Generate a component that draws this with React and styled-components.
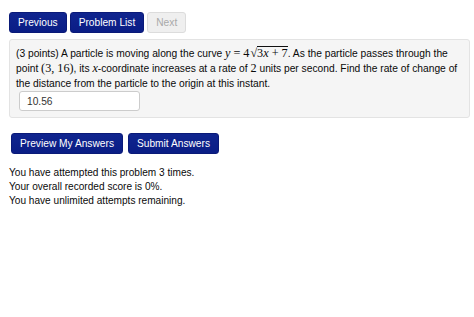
import React from 'react';
import styled, { createGlobalStyle } from 'styled-components';

const GlobalStyle = createGlobalStyle`
  html, body {
    margin: 0;
    padding: 0;
    background: #ffffff;
  }
  body {
    font-family: 'Liberation Sans', Arial, Helvetica, sans-serif;
    font-size: 10.2px;
    color: #0a0a0a;
  }
`;

const Page = styled.div`
  padding: 12px 4px 20px 9px;
`;

const NavBar = styled.div`
  display: flex;
  gap: 3px;
`;

const Button = styled.button`
  height: 21px;
  padding: 0 ${p => p.pad || 8}px;
  font-family: 'Liberation Sans', Arial, sans-serif;
  font-size: 10.2px;
  line-height: 19px;
  border-radius: 3px;
  border: 1px solid ${p => (p.disabled ? '#dcdcdc' : '#0a1a78')};
  background: ${p => (p.disabled ? '#efefef' : 'linear-gradient(180deg, #10258f 0%, #0a1d85 100%)')};
  color: ${p => (p.disabled ? '#a9a9a9' : '#ffffff')};
  cursor: ${p => (p.disabled ? 'default' : 'pointer')};
`;

const ProblemBox = styled.div`
  margin-top: 6px;
  padding: 6px 7px 6px 6px;
  background: #f5f5f5;
  border: 1px solid #e3e3e3;
  border-radius: 3px;
`;

const ProblemText = styled.p`
  margin: 0;
  line-height: 15px;
  font-size: 10.25px;
`;

const Math = styled.span`
  font-family: 'Liberation Serif', 'Times New Roman', serif;
  font-size: 12.2px;
  font-style: ${p => (p.italic ? 'italic' : 'normal')};
`;

const Radical = styled.span`
  font-family: 'Liberation Serif', serif;
  font-size: 12.2px;
  margin-left: 1px;
`;

const Radicand = styled.span`
  border-top: 1px solid #111;
  display: inline-block;
  line-height: 12px;
`;

const AnswerInput = styled.input`
  display: block;
  margin: 0 0 0 3px;
  width: 121px;
  height: 20px;
  box-sizing: border-box;
  padding: 0 7px;
  font-family: 'Liberation Sans', Arial, sans-serif;
  font-size: 10.2px;
  color: #333;
  border: 1px solid #cccccc;
  border-radius: 3px;
  background: #ffffff;
`;

const Actions = styled.div`
  display: flex;
  gap: 5px;
  margin: 15px 0 0 2px;
`;

const Status = styled.div`
  margin-top: 12px;
  line-height: 14px;
  font-size: 10.1px;
`;

export default function App() {
  return (
    <>
      <GlobalStyle />
      <Page>
        <NavBar>
          <Button>Previous</Button>
          <Button>Problem List</Button>
          <Button disabled>Next</Button>
        </NavBar>

        <ProblemBox>
          <ProblemText>
            (3 points) A particle is moving along the curve{' '}
            <Math italic>y</Math> <Math>= 4</Math>
            <Radical>√</Radical>
            <Radicand>
              <Math>3</Math>
              <Math italic>x</Math>
              <Math> + 7</Math>
            </Radicand>
            . As the particle passes through the point <Math>(3, 16)</Math>, its{' '}
            <Math italic>x</Math>-coordinate increases at a rate of <Math>2</Math> units per
            second. Find the rate of change of the distance from the particle to the origin at
            this instant.
          </ProblemText>
          <AnswerInput defaultValue="10.56" />
        </ProblemBox>

        <Actions>
          <Button>Preview My Answers</Button>
          <Button>Submit Answers</Button>
        </Actions>

        <Status>
          <div>You have attempted this problem 3 times.</div>
          <div>Your overall recorded score is 0%.</div>
          <div>You have unlimited attempts remaining.</div>
        </Status>
      </Page>
    </>
  );
}
